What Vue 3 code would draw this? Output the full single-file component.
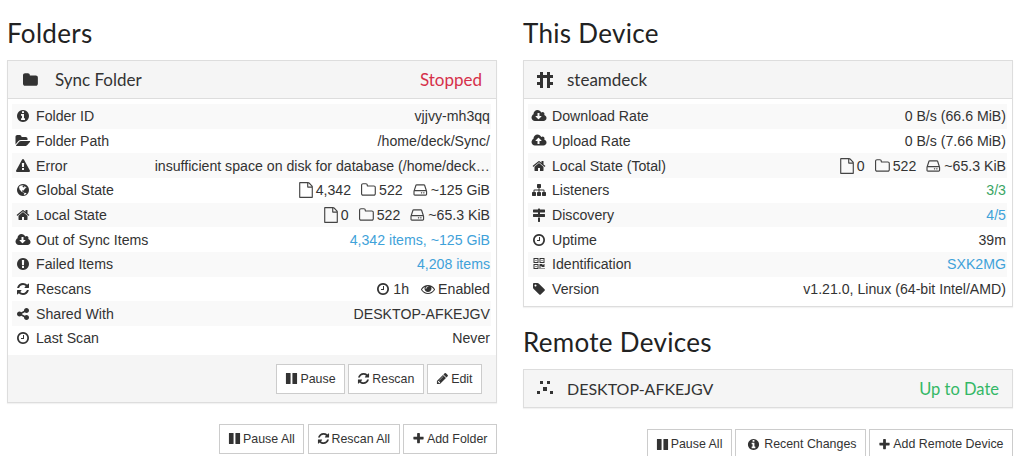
<template>
  <div class="page">
    <div class="column">
      <h3 class="section-title">Folders</h3>
      <div class="panel">
        <div class="panel-heading">
          <svg class="head-icon" viewBox="0 0 1792 1792"><path :d="icons.folder" /></svg>
          <span class="panel-name">Sync Folder</span>
          <span class="panel-status stopped">Stopped</span>
        </div>
        <div class="panel-body">
          <div v-for="row in folderRows" :key="row.label" class="row">
            <span class="row-label">
              <svg class="icon" viewBox="0 0 1792 1792"><path :d="icons[row.icon]" /></svg>{{ row.label }}
            </span>
            <span v-if="row.counts" class="row-value">
              <span class="count"><svg class="icon-o" viewBox="0 0 1792 1792"><path :d="icons.file" /></svg>{{ row.counts[0] }}</span>
              <span class="count"><svg class="icon-o" viewBox="0 0 1792 1792"><path :d="icons.folderO" /></svg>{{ row.counts[1] }}</span>
              <span class="count"><svg class="icon-o" viewBox="0 0 1792 1792"><path :d="icons.hdd" /></svg>{{ row.counts[2] }}</span>
            </span>
            <span v-else-if="row.rescans" class="row-value rescans">
              <span class="count"><svg class="icon-o dark" viewBox="0 0 1792 1792"><path :d="icons.clock" /></svg>1h</span>
              <span class="count"><svg class="icon-o dark" viewBox="0 0 1792 1792"><path :d="icons.eye" /></svg>Enabled</span>
            </span>
            <span v-else :class="['row-value', row.color]">{{ row.value }}</span>
          </div>
        </div>
        <div class="panel-footer">
          <button class="btn"><svg class="btn-icon" viewBox="0 0 1792 1792"><path :d="icons.pause" /></svg>Pause</button>
          <button class="btn"><svg class="btn-icon" viewBox="0 0 1792 1792"><path :d="icons.refresh" /></svg>Rescan</button>
          <button class="btn"><svg class="btn-icon" viewBox="0 0 1792 1792"><path :d="icons.pencil" /></svg>Edit</button>
        </div>
      </div>
      <div class="actions">
        <button class="btn"><svg class="btn-icon" viewBox="0 0 1792 1792"><path :d="icons.pause" /></svg>Pause All</button>
        <button class="btn"><svg class="btn-icon" viewBox="0 0 1792 1792"><path :d="icons.refresh" /></svg>Rescan All</button>
        <button class="btn"><svg class="btn-icon" viewBox="0 0 1792 1792"><path :d="icons.plus" /></svg>Add Folder</button>
      </div>
    </div>

    <div class="column">
      <h3 class="section-title">This Device</h3>
      <div class="panel">
        <div class="panel-heading">
          <svg class="identicon" viewBox="0 0 5 5" shape-rendering="crispEdges">
            <rect v-for="c in deckCells" :key="c.join()" :x="c[0]" :y="c[1]" width="1" height="1" />
          </svg>
          <span class="panel-name">steamdeck</span>
        </div>
        <div class="panel-body device-body">
          <div v-for="row in deviceRows" :key="row.label" class="row">
            <span class="row-label">
              <svg class="icon" viewBox="0 0 1792 1792"><path :d="icons[row.icon]" /></svg>{{ row.label }}
            </span>
            <span v-if="row.counts" class="row-value">
              <span class="count"><svg class="icon-o" viewBox="0 0 1792 1792"><path :d="icons.file" /></svg>{{ row.counts[0] }}</span>
              <span class="count"><svg class="icon-o" viewBox="0 0 1792 1792"><path :d="icons.folderO" /></svg>{{ row.counts[1] }}</span>
              <span class="count"><svg class="icon-o" viewBox="0 0 1792 1792"><path :d="icons.hdd" /></svg>{{ row.counts[2] }}</span>
            </span>
            <span v-else :class="['row-value', row.color]">{{ row.value }}</span>
          </div>
        </div>
      </div>
      <h3 class="section-title remote-title">Remote Devices</h3>
      <div class="panel">
        <div class="panel-heading remote-heading">
          <svg class="identicon" viewBox="0 0 5 5" shape-rendering="crispEdges">
            <rect v-for="c in desktopCells" :key="c.join()" :x="c[0]" :y="c[1]" width="1" height="1" />
          </svg>
          <span class="panel-name caps">DESKTOP-AFKEJGV</span>
          <span class="panel-status synced">Up to Date</span>
        </div>
      </div>
      <div class="actions">
        <button class="btn"><svg class="btn-icon" viewBox="0 0 1792 1792"><path :d="icons.pause" /></svg>Pause All</button>
        <button class="btn"><svg class="btn-icon wide" viewBox="0 0 1792 1792"><path :d="icons.info" /></svg>Recent Changes</button>
        <button class="btn"><svg class="btn-icon" viewBox="0 0 1792 1792"><path :d="icons.plus" /></svg>Add Remote Device</button>
      </div>
    </div>
  </div>
</template>

<script setup>
const cloud = 'zm640 224q0 159-112.5 271.5t-271.5 112.5h-1088q-185 0-316.5-131.5t-131.5-316.5q0-130 70-240t188-165q-2-30-2-43 0-212 150-362t362-150q156 0 285.5 87t188.5 231q71-62 166-62 106 0 181 75t75 181q0 76-41 138 130 31 213.5 135.5t83.5 238.5z'

const icons = {
  folder: 'M1664 608v704q0 92-66 158t-158 66h-1216q-92 0-158-66t-66-158v-960q0-92 66-158t158-66h320q92 0 158 66t66 158v32h672q92 0 158 66t66 158z',
  folderO: 'M1536 1312v-704q0-40-28-68t-68-28h-704q-40 0-68-28t-28-68v-64q0-40-28-68t-68-28h-320q-40 0-68 28t-28 68v960q0 40 28 68t68 28h1216q40 0 68-28t28-68zm128-704v704q0 92-66 158t-158 66h-1216q-92 0-158-66t-66-158v-960q0-92 66-158t158-66h320q92 0 158 66t66 158v32h672q92 0 158 66t66 158z',
  folderOpen: 'M1815 952q0 31-31 66l-336 396q-43 51-120.5 86.5t-143.5 35.5h-1088q-34 0-60.5-13t-26.5-43q0-31 31-66l336-396q43-51 120.5-86.5t143.5-35.5h1088q34 0 60.5 13t26.5 43zm-343-344v160h-832q-94 0-197 47.5t-164 119.5l-337 396-5 6q0-4-.5-12.5t-.5-12.5v-960q0-92 66-158t158-66h320q92 0 158 66t66 158v32h544q92 0 158 66t66 158z',
  info: 'M1152 1376v-160q0-14-9-23t-23-9h-96v-512q0-14-9-23t-23-9h-320q-14 0-23 9t-9 23v160q0 14 9 23t23 9h96v320h-96q-14 0-23 9t-9 23v160q0 14 9 23t23 9h448q14 0 23-9t9-23zm-128-896v-160q0-14-9-23t-23-9h-192q-14 0-23 9t-9 23v160q0 14 9 23t23 9h192q14 0 23-9t9-23zm640 416q0 209-103 385.5t-279.5 279.5-385.5 103-385.5-103-279.5-279.5-103-385.5 103-385.5 279.5-279.5 385.5-103 385.5 103 279.5 279.5 103 385.5z',
  warning: 'M1024 1375v-190q0-14-9.5-23.5t-22.5-9.5h-192q-13 0-22.5 9.5t-9.5 23.5v190q0 14 9.5 23.5t22.5 9.5h192q13 0 22.5-9.5t9.5-23.5zm-2-374l18-459q0-12-10-19-13-11-24-11h-220q-11 0-24 11-10 7-10 21l17 457q0 10 10 16.5t24 6.5h185q14 0 23.5-6.5t10.5-16.5zm-14-934l768 1408q35 63-2 126-17 29-46.5 46t-63.5 17h-1536q-34 0-63.5-17t-46.5-46q-37-63-2-126l768-1408q17-31 47-49t65-18 65 18 47 49z',
  globe: 'M896 128q209 0 385.5 103t279.5 279.5 103 385.5-103 385.5-279.5 279.5-385.5 103-385.5-103-279.5-279.5-103-385.5 103-385.5 279.5-279.5 385.5-103zm274 521q-2 1-9.5 9.5t-13.5 9.5q2 0 4.5-5t5-11 3.5-7q6-7 22-15 14-6 52-12 34-8 51 11-2-2 9.5-13t14.5-12q3-2 15-4.5t15-7.5l2-22q-12 1-17.5-7t-6.5-21q0 2-6 8 0-7-4.5-8t-11.5 1-9 1q-10-3-15-7.5t-8-16.5-4-15q-2-5-9.5-11t-9.5-10q-1-2-2.5-5.5t-3-6.5-4-5.5-5.5-2.5-7 5-7.5 10-4.5 5q-3-2-6-1.5t-4.5 1-4.5 3-5 3.5q-3 2-8.5 3t-8.5 2q15-5-1-11-10-4-16-3 9-4 7.5-12t-8.5-14h5q-1-4-8.5-8.5t-17.5-8.5-13-6q-8-5-34-9.5t-33-.5q-5 6-4.5 10.5t4 14 3.5 12.5q1 6-5.5 13t-6.5 12q0 7 14 15.5t10 21.5q-3 8-16 16t-16 12q-5 8-1.5 18.5t10.5 16.5q2 2 1.5 4t-3.5 4.5-5.5 4-6.5 3.5l-3 2q-11 5-20.5-6t-13.5-26q-7-25-16-30-23-8-29 1-5-13-41-26-25-9-58-4 6-1 0-15-7-15-19-12 3-6 4-17.5t1-13.5q3-13 12-23 1-1 7-8.5t9.5-13.5.5-6q35 4 50-11 5-5 11.5-17t10.5-17q9-6 14-5.5t14.5 5.5 14.5 5q14 1 15.5-11t-7.5-20q12 1 3-17-4-7-8-9-12-4-27 5-8 4 2 8-1-1-9.5 10.5t-16.5 17.5-14-13q-1-1-5.5-13.5t-9.5-13.5q-8 0-16 15 3-8-11-15t-24-8q19-12-8-27-7-4-20.5-5t-19.5 4q-5 7-5.5 11.5t5 8 10.5 5.5 11.5 4 8.5 3q14 10 8 14-2 1-8.5 3.5t-11.5 4.5-6 4q-3 4 0 14t-2 14q-5-5-9-17.5t-7-16.5q7 9-25 6l-10-1q-4 0-16 2t-20.5 1-13.5-8q-4-8 0-20 1-4 4-2-4-3-11-9.5t-10-8.5q-46 15-94 41 6 1 12-1 5-2 13-6.5t10-5.5q34-14 42-7l5-5q14 16 20 25-7-4-30-1-20 6-22 12 7 12 5 18-4-3-11.5-10t-14.5-11-15-5q-16 0-22 1-146 80-235 222 7 7 12 8 4 1 5 9t2.5 11 11.5-3q9 8 3 19 1-1 44 27 19 17 21 21 3 11-10 18-1-2-9-9t-9-4q-3 5 .5 18.5t10.5 12.5q-7 0-9.5 16t-2.5 35.5-1 23.5l2 1q-3 12 5.5 34.5t21.5 19.5q-13 3 20 43 6 8 8 9 3 2 12 7.5t15 10 10 10.5q4 5 10 22.5t14 23.5q-2 6 9.5 20t10.5 23q-1 0-2.5 1t-2.5 1q3 7 15.5 14t15.5 13q1 3 2 10t3 11 8 2q2-20-24-62-15-25-17-29-3-5-5.5-15.5t-4.5-14.5q2 0 6 1.5t8.5 3.5 7.5 4 2 3q-3 7 2 17.5t12 18.5 17 19 12 13q6 6 14 19.5t0 13.5q9 0 20 10.5t17 19.5q5 8 8 26t5 24q2 7 8.5 13.5t12.5 9.5l16 8 13 7q5 2 18.5 10.5t21.5 11.5q10 4 16 4t14.5-2.5 13.5-3.5q15-2 29 15t21 21q36 19 55 11-2 1 .5 7.5t8 15.5 9 14.5 5.5 8.5q5 6 18 15t18 15q6-4 7-9-3 8 7 20t18 10q14-3 14-32-31 15-49-18 0-1-2.5-5.5t-4-8.5-2.5-8.5 0-7.5 5-3q9 0 10-3.5t-2-12.5-4-13q-1-8-11-20t-12-15q-5 9-16 8t-16-9q0 1-1.5 5.5t-1.5 6.5q-13 0-15-1 1-3 2.5-17.5t3.5-22.5q1-4 5.5-12t7.5-14.5 4-12.5-4.5-9.5-17.5-2.5q-19 1-26 20-1 3-3 10.5t-5 11.5-9 7q-7 3-24 2t-24-5q-13-8-22.5-29t-9.5-37q0-10 2.5-26.5t3-25-5.5-24.5q3-2 9-9.5t10-10.5q2-1 4.5-1.5t4.5 0 4-1.5 3-6q-1-1-4-3-3-3-4-3 7 3 28.5-1.5t27.5 1.5q15 11 22-2 0-1-2.5-9.5t-.5-13.5q5 27 29 9 3 3 15.5 5t17.5 5q3 2 7 5.5t5.5 4.5 5-.5 8.5-6.5q10 14 12 24 11 40 19 44 7 3 11 2t4.5-9.5 0-14-1.5-12.5l-1-8v-18l-1-8q-15-3-18.5-12t1.5-18.5 15-18.5q1-1 8-3.5t15.5-6.5 12.5-8q21-19 15-35 7 0 11-9-1 0-5-3t-7.5-5-4.5-2q9-5 2-16 5-3 7.5-11t7.5-10q9 12 21 2 8-8 1-16 5-7 20.5-10.5t18.5-9.5q7 2 8-2t1-12 3-12q4-5 15-9t13-5l17-11q3-4 0-4 18 2 31-11 10-11-6-20 3-6-3-9.5t-15-5.5q3-1 11.5-.5t10.5-1.5q15-10-7-16-17-5-43 12zm-163 877q206-36 351-189-3-3-12.5-4.5t-12.5-3.5q-18-7-24-8 1-7-2.5-13t-8-9-12.5-8-11-7q-2-2-7-6t-7-5.5-7.5-4.5-8.5-2-10 1l-3 1q-3 1-5.5 2.5t-5.5 3-4 3 0 2.5q-21-17-36-22-5-1-11-5.5t-10.5-7-10-1.5-11.5 7q-5 5-6 15t-2 13q-7-5 0-17.5t2-18.5q-3-6-10.5-4.5t-12 4.5-11.5 8.5-9 6.5-8.5 5.5-8.5 7.5q-3 4-6 12t-5 11q-2-4-11.5-6.5t-9.5-5.5q2 10 4 35t5 38q7 31-12 48-27 25-29 40-4 22 12 26 0 7-8 20.5t-7 21.5q0 6 2 16z',
  home: 'M1472 992v480q0 26-19 45t-45 19h-384v-384h-256v384h-384q-26 0-45-19t-19-45v-480q0-1 .5-3t.5-3l575-474 575 474q1 2 1 6zm223-69l-62 74q-8 9-21 11h-3q-13 0-21-7l-692-577-692 577q-12 8-24 7-13-2-21-11l-62-74q-8-10-7-23.5t11-21.5l719-599q32-26 76-26t76 26l244 204v-195q0-14 9-23t23-9h192q14 0 23 9t9 23v408l219 182q10 8 11 21.5t-7 23.5z',
  cloudDown: 'M1216 928q0-14-9-23t-23-9h-224v-352q0-13-9.5-22.5t-22.5-9.5h-192q-13 0-22.5 9.5t-9.5 22.5v352h-224q-13 0-22.5 9.5t-9.5 22.5q0 14 9 23l352 352q9 9 23 9t23-9l351-351q10-12 10-24' + cloud,
  cloudUp: 'M1216 864q0-14-9-23l-352-352q-9-9-23-9t-23 9l-351 351q-10 12-10 24 0 14 9 23t23 9h224v352q0 13 9.5 22.5t22.5 9.5h192q13 0 22.5-9.5t9.5-22.5v-352h224q13 0 22.5-9.5t9.5-22.5' + cloud,
  alert: 'M896 128q209 0 385.5 103t279.5 279.5 103 385.5-103 385.5-279.5 279.5-385.5 103-385.5-103-279.5-279.5-103-385.5 103-385.5 279.5-279.5 385.5-103zm128 1247v-190q0-14-9-23.5t-22-9.5h-192q-13 0-23 10t-10 23v190q0 13 10 23t23 10h192q13 0 22-9.5t9-23.5zm-2-344l18-621q0-12-10-18-10-8-24-8h-220q-14 0-24 8-10 6-10 18l17 621q0 10 10 17.5t24 7.5h185q14 0 23.5-7.5t10.5-17.5z',
  refresh: 'M1639 1056q0 5-1 7-64 268-268 434.5t-478 166.5q-146 0-282.5-55t-243.5-157l-129 129q-19 19-45 19t-45-19-19-45v-448q0-26 19-45t45-19h448q26 0 45 19t19 45-19 45l-137 137q71 66 161 102t187 36q134 0 250-65t186-179q11-17 53-117 8-23 30-23h192q13 0 22.5 9.5t9.5 22.5zm25-800v448q0 26-19 45t-45 19h-448q-26 0-45-19t-19-45 19-45l138-138q-148-137-349-137-134 0-250 65t-186 179q-11 17-53 117-8 23-30 23h-199q-13 0-22.5-9.5t-9.5-22.5v-7q65-268 270-434.5t480-166.5q146 0 284 55.5t245 156.5l130-129q19-19 45-19t45 19 19 45z',
  share: 'M1344 1024q133 0 226.5 93.5t93.5 226.5-93.5 226.5-226.5 93.5-226.5-93.5-93.5-226.5q0-12 2-34l-360-180q-92 86-218 86-133 0-226.5-93.5t-93.5-226.5 93.5-226.5 226.5-93.5q126 0 218 86l360-180q-2-22-2-34 0-133 93.5-226.5t226.5-93.5 226.5 93.5 93.5 226.5-93.5 226.5-226.5 93.5q-126 0-218-86l-360 180q2 22 2 34t-2 34l360 180q92-86 218-86z',
  clock: 'M1024 544v448q0 14-9 23t-23 9h-320q-14 0-23-9t-9-23v-64q0-14 9-23t23-9h224v-352q0-14 9-23t23-9h64q14 0 23 9t9 23zm416 352q0-148-73-273t-198-198-273-73-273 73-198 198-73 273 73 273 198 198 273 73 273-73 198-198 73-273zm224 0q0 209-103 385.5t-279.5 279.5-385.5 103-385.5-103-279.5-279.5-103-385.5 103-385.5 279.5-279.5 385.5-103 385.5 103 279.5 279.5 103 385.5z',
  pause: 'M1664 192v1408q0 26-19 45t-45 19h-512q-26 0-45-19t-19-45v-1408q0-26 19-45t45-19h512q26 0 45 19t19 45zm-896 0v1408q0 26-19 45t-45 19h-512q-26 0-45-19t-19-45v-1408q0-26 19-45t45-19h512q26 0 45 19t19 45z',
  pencil: 'M491 1536l91-91-235-235-91 91v107h128v128h107zm523-928q0-22-22-22-10 0-17 7l-542 542q-7 7-7 17 0 22 22 22 10 0 17-7l542-542q7-7 7-17zm-54-192l416 416-832 832h-416v-416zm683 96q0 53-37 90l-166 166-416-416 166-165q36-38 90-38 53 0 91 38l235 234q37 39 37 91z',
  plus: 'M1600 736v192q0 40-28 68t-68 28h-416v416q0 40-28 68t-68 28h-192q-40 0-68-28t-28-68v-416h-416q-40 0-68-28t-28-68v-192q0-40 28-68t68-28h416v-416q0-40 28-68t68-28h192q40 0 68 28t28 68v416h416q40 0 68 28t28 68z',
  eye: 'M1664 960q-152-236-381-353 61 104 61 225 0 185-131.5 316.5t-316.5 131.5-316.5-131.5-131.5-316.5q0-121 61-225-229 117-381 353 133 205 333.5 326.5t434.5 121.5 434.5-121.5 333.5-326.5zm-720-384q0-20-14-34t-34-14q-125 0-214.5 89.5t-89.5 214.5q0 20 14 34t34 14 34-14 14-34q0-86 61-147t147-61q20 0 34-14t14-34zm848 384q0 34-20 69-140 230-376.5 368.5t-499.5 138.5-499.5-139-376.5-368q-20-35-20-69t20-69q140-229 376.5-368t499.5-139 499.5 139 376.5 368q20 35 20 69z',
  file: 'M1596 380q28 28 48 76t20 88v1152q0 40-28 68t-68 28h-1344q-40 0-68-28t-28-68v-1600q0-40 28-68t68-28h896q40 0 88 20t76 48zm-444-244v376h376q-10-29-22-41l-313-313q-12-12-41-22zm384 1528v-1024h-416q-40 0-68-28t-28-68v-416h-768v1536h1280z',
  hdd: 'M1040 1216q0 33-23.5 56.5t-56.5 23.5-56.5-23.5-23.5-56.5 23.5-56.5 56.5-23.5 56.5 23.5 23.5 56.5zm256 0q0 33-23.5 56.5t-56.5 23.5-56.5-23.5-23.5-56.5 23.5-56.5 56.5-23.5 56.5 23.5 23.5 56.5zm160 160v-320q0-13-9.5-22.5t-22.5-9.5h-1216q-13 0-22.5 9.5t-9.5 22.5v320q0 13 9.5 22.5t22.5 9.5h1216q13 0 22.5-9.5t9.5-22.5zm-1230-480h1180l-157-482q-4-13-16-21.5t-26-8.5h-782q-14 0-26 8.5t-16 21.5zm1358 160v320q0 66-47 113t-113 47h-1216q-66 0-113-47t-47-113v-320q0-25 16-75l197-606q17-53 63-86t101-33h782q55 0 101 33t63 86l197 606q16 50 16 75z',
  sitemap: 'M1792 1248v320q0 40-28 68t-68 28h-320q-40 0-68-28t-28-68v-320q0-40 28-68t68-28h96v-192h-512v192h96q40 0 68 28t28 68v320q0 40-28 68t-68 28h-320q-40 0-68-28t-28-68v-320q0-40 28-68t68-28h96v-192h-512v192h96q40 0 68 28t28 68v320q0 40-28 68t-68 28h-320q-40 0-68-28t-28-68v-320q0-40 28-68t68-28h96v-192q0-52 38-90t90-38h512v-192h-96q-40 0-68-28t-28-68v-320q0-40 28-68t68-28h320q40 0 68 28t28 68v320q0 40-28 68t-68 28h-96v192h512q52 0 90 38t38 90v192h96q40 0 68 28t28 68z',
  signs: 'M768 1216h256v512q0 26-19 45t-45 19h-128q-26 0-45-19t-19-45zM1600 768q26 0 45 19t19 45v256q0 26-19 45t-45 19h-1408q-26 0-45-19t-19-45v-256q0-26 19-45t45-19h576v-192h256v192zM192 192h576v-64q0-26 19-45t45-19h128q26 0 45 19t19 45v64h576q26 0 45 19t19 45v256q0 26-19 45t-45 19h-1408q-26 0-45-19t-19-45v-256q0-26 19-45t45-19z',
  qrcode: 'M576 1152v128h-128v-128h128zm0-768v128h-128v-128h128zm768 0v128h-128v-128h128zm-1024 1023h384v-383h-384v383zm0-767h384v-384h-384v384zm768 0h384v-384h-384v384zm-256 256v640h-640v-640h640zm512 512v128h-128v-128h128zm256 0v128h-128v-128h128zm0-512v384h-384v-128h-128v384h-128v-640h384v128h128v-128h128zm-768-768v640h-640v-640h640zm768 0v640h-640v-640h640z',
  tag: 'M576 448q0-53-37.5-90.5t-90.5-37.5-90.5 37.5-37.5 90.5 37.5 90.5 90.5 37.5 90.5-37.5 37.5-90.5zm1067 576q0 53-37 90l-491 492q-39 37-91 37-53 0-90-37l-715-716q-38-37-64.5-101t-26.5-117v-416q0-52 38-90t90-38h416q53 0 117 26.5t102 64.5l715 714q37 39 37 91z'
}

const folderRows = [
  { icon: 'info', label: 'Folder ID', value: 'vjjvy-mh3qq' },
  { icon: 'folderOpen', label: 'Folder Path', value: '/home/deck/Sync/' },
  { icon: 'warning', label: 'Error', value: 'insufficient space on disk for database (/home/deck…' },
  { icon: 'globe', label: 'Global State', counts: ['4,342', '522', '~125 GiB'] },
  { icon: 'home', label: 'Local State', counts: ['0', '522', '~65.3 KiB'] },
  { icon: 'cloudDown', label: 'Out of Sync Items', value: '4,342 items, ~125 GiB', color: 'link' },
  { icon: 'alert', label: 'Failed Items', value: '4,208 items', color: 'link' },
  { icon: 'refresh', label: 'Rescans', rescans: true },
  { icon: 'share', label: 'Shared With', value: 'DESKTOP-AFKEJGV' },
  { icon: 'clock', label: 'Last Scan', value: 'Never' }
]

const deviceRows = [
  { icon: 'cloudDown', label: 'Download Rate', value: '0 B/s (66.6 MiB)' },
  { icon: 'cloudUp', label: 'Upload Rate', value: '0 B/s (7.66 MiB)' },
  { icon: 'home', label: 'Local State (Total)', counts: ['0', '522', '~65.3 KiB'] },
  { icon: 'sitemap', label: 'Listeners', value: '3/3', color: 'good' },
  { icon: 'signs', label: 'Discovery', value: '4/5', color: 'link' },
  { icon: 'clock', label: 'Uptime', value: '39m' },
  { icon: 'qrcode', label: 'Identification', value: 'SXK2MG', color: 'link' },
  { icon: 'tag', label: 'Version', value: 'v1.21.0, Linux (64-bit Intel/AMD)' }
]

// identicon squares, [x, y] on a 5x5 grid
const deckCells = [[1, 0], [3, 0], [0, 1], [1, 1], [2, 1], [3, 1], [4, 1], [1, 2], [3, 2], [0, 3], [1, 3], [3, 3], [4, 3], [1, 4], [3, 4]]
const desktopCells = [[1, 0], [3, 0], [2, 2], [0, 3], [4, 3]]
</script>

<style scoped>
.page {
  display: grid;
  grid-template-columns: 490px 490px;
  column-gap: 26px;
  padding: 0 11px 0 7px;
  font-family: "Liberation Sans", Arial, sans-serif;
  font-size: 14.15px;
  line-height: 20px;
  color: #333;
}

.section-title {
  font-family: Lato, "Open Sans", sans-serif;
  font-size: 26px;
  font-weight: 400;
  letter-spacing: 0.3px;
  line-height: 28px;
  color: #222;
  margin: 19px 0 13px;
}

.remote-title {
  margin-top: 21px;
}

.panel {
  background: #fff;
  border: 1px solid #ddd;
  box-shadow: 0 1px 1px rgba(0, 0, 0, 0.05);
}

.panel-heading {
  display: flex;
  align-items: center;
  height: 37px;
  padding: 0 14px 0 15px;
  background: #f5f5f5;
  border-bottom: 1px solid #ddd;
  font-family: Lato, "Open Sans", sans-serif;
  font-size: 17px;
}

.remote-heading {
  border-bottom: none;
  padding-right: 13px;
}

.head-icon {
  width: 16px;
  height: 16px;
  fill: #333;
  margin-right: 16px;
}

.identicon {
  width: 16px;
  height: 16px;
  fill: #333;
  margin: 0 14px 0 -2px;
}

.panel-name {
  flex: 1;
}

.panel-name.caps {
  font-size: 16px;
}

.panel-status.stopped {
  color: #d6304a;
}

.panel-status.synced {
  font-size: 16.5px;
  color: #34b866;
}

.panel-body {
  padding: 5px 5px 4px 4px;
}

.device-body {
  padding-bottom: 5px;
}

.row {
  display: flex;
  align-items: center;
  justify-content: space-between;
  height: 24.67px;
  padding: 0 1px 0 4px;
}

.row:nth-child(odd) {
  background: #f9f9f9;
}

.row-label {
  display: flex;
  align-items: center;
  flex-shrink: 0;
  white-space: nowrap;
}

.icon {
  width: 14px;
  height: 14px;
  fill: #333;
  margin-right: 6px;
  flex-shrink: 0;
  overflow: visible;
}

.row-value {
  display: flex;
  align-items: center;
  justify-content: flex-end;
  gap: 10px;
  white-space: nowrap;
}

.row-value.rescans {
  gap: 12px;
}

.row-value.link {
  color: #3fa2d9;
}

.row-value.good {
  color: #3aa564;
}

.count {
  display: inline-flex;
  align-items: center;
}

.icon-o {
  width: 16px;
  height: 16px;
  fill: #444;
  margin-right: 2px;
  overflow: visible;
}

.icon-o.dark {
  width: 14px;
  height: 14px;
  fill: #333;
  margin-right: 3px;
}

.panel-footer {
  display: flex;
  justify-content: flex-end;
  gap: 3.3px;
  height: 47px;
  padding: 9px 14px 0 0;
  background: #f5f5f5;
  box-sizing: border-box;
}

.actions {
  display: flex;
  justify-content: flex-end;
  gap: 3.3px;
  margin-top: 21px;
}

.btn {
  display: inline-flex;
  align-items: center;
  height: 30px;
  padding: 0 8.5px 0 8px;
  background: #fff;
  border: 1px solid #ccc;
  font-family: inherit;
  font-size: 12.4px;
  color: #333;
}

.btn-icon {
  width: 13px;
  height: 13px;
  fill: #333;
  margin-right: 2px;
}

.btn-icon.wide {
  margin: 0 4px 0 3px;
}
</style>

<style>
body {
  background: #fff;
  overflow: hidden;
}
</style>
